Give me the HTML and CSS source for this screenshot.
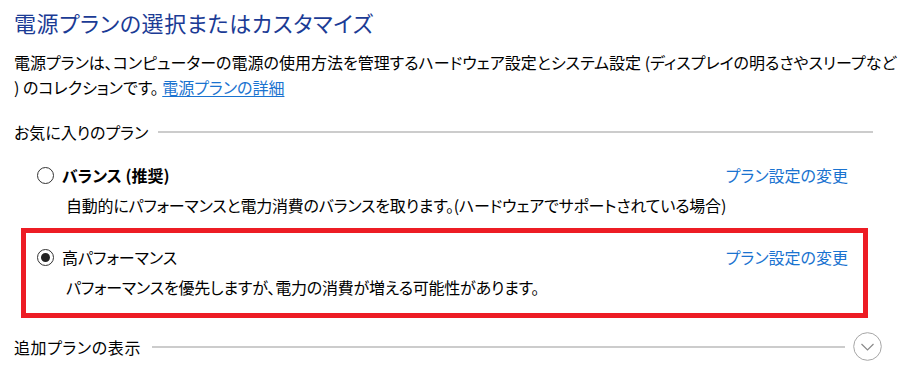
FILE: index.html
```html
<!DOCTYPE html>
<html lang="ja">
<head>
<meta charset="utf-8">
<title>電源オプション</title>
<link rel="stylesheet" href="styles.css">
</head>
<body>
<main class="page">
  <h1 class="title">電源プランの選択またはカスタマイズ</h1>
  <p class="intro">電源プランは、コンピューターの電源の使用方法を管理するハードウェア設定とシステム設定 (ディスプレイの明るさやスリープなど<br>) のコレクションです。 <a class="link underline" href="#">電源プランの詳細</a></p>

  <div class="section-head">
    <span class="section-label">お気に入りのプラン</span>
    <span class="rule rule-first"></span>
  </div>

  <div class="plan">
    <div class="plan-row">
      <span class="radio"></span>
      <span class="plan-name bold">バランス (推奨)</span>
      <a class="link plan-link" href="#">プラン設定の変更</a>
    </div>
    <p class="plan-desc">自動的にパフォーマンスと電力消費のバランスを取ります。(ハードウェアでサポートされている場合)</p>
  </div>

  <div class="plan plan-selected">
    <div class="plan-row">
      <span class="radio radio-on"></span>
      <span class="plan-name">高パフォーマンス</span>
      <a class="link plan-link" href="#">プラン設定の変更</a>
    </div>
    <p class="plan-desc">パフォーマンスを優先しますが、電力の消費が増える可能性があります。</p>
  </div>

  <div class="section-head section-more">
    <span class="section-label">追加プランの表示</span>
    <span class="rule rule-second"></span>
    <span class="expand">
      <svg width="29" height="29" viewBox="0 0 29 29" aria-hidden="true">
        <circle cx="14.5" cy="14.5" r="13.8" fill="#fff" stroke="#a6a6a6" stroke-width="1"/>
        <path d="M8.5 12 L14.5 18 L20.5 12" fill="none" stroke="#8a8a8a" stroke-width="1.2"/>
      </svg>
    </span>
  </div>
</main>
</body>
</html>
```
FILE: styles.css
```css
html, body {
  margin: 0;
  padding: 0;
  background: #ffffff;
}

body {
  font-family: "Noto Sans CJK JP", "Noto Sans", sans-serif;
  font-feature-settings: "palt" 1;
  color: #000000;
  font-size: 16px;
}

.page {
  width: 901px;
  height: 371px;
  box-sizing: border-box;
  padding: 7px 19px 0 14px;
  overflow: hidden;
}

.title {
  margin: 0;
  font-size: 22px;
  line-height: 30px;
  font-weight: 400;
  letter-spacing: 0.6px;
  color: #1b3b95;
}

.intro {
  margin: 13px 0 0 0;
  line-height: 25px;
  letter-spacing: 0;
  white-space: nowrap;
}

.link {
  color: #1a73d0;
  text-decoration: none;
}

.underline {
  text-decoration: underline;
  text-underline-offset: 2px;
}

.section-head {
  display: flex;
  align-items: center;
  height: 24px;
  margin-top: 20px;
}

.section-label {
  line-height: 24px;
  white-space: nowrap;
}

.section-more .section-label {
  letter-spacing: 0.6px;
}

.rule {
  height: 2px;
  background: #cccccc;
  flex: 1;
}

.rule-first {
  margin-left: 10px;
  margin-right: 9px;
}

.plan {
  margin: 7px 19px 0 12px;
  height: 80px;
  box-sizing: border-box;
  padding: 12px 15px 0 11px;
}

.plan + .plan {
  margin-top: 2px;
}

.plan-selected {
  outline: 5px solid #ed1c24;
}

.plan-row {
  display: flex;
  align-items: center;
  height: 24px;
}

.radio {
  width: 17px;
  height: 17px;
  box-sizing: border-box;
  border: 1px solid #333333;
  border-radius: 50%;
  background: #fff;
  margin-right: 8px;
  display: flex;
  align-items: center;
  justify-content: center;
}

.radio-on::after {
  content: "";
  width: 9px;
  height: 9px;
  border-radius: 50%;
  background: #222222;
}

.plan-name {
  flex: 1;
  line-height: 24px;
}

.bold {
  font-weight: 700;
}

.plan-link {
  line-height: 24px;
}

.plan-desc {
  margin: 6px 0 0 29px;
  line-height: 24px;
  letter-spacing: -0.2px;
  white-space: nowrap;
}

.section-more {
  height: 29px;
  margin-top: 19px;
}

.rule-second {
  margin-left: 11px;
  margin-right: 8px;
}

.expand {
  width: 29px;
  height: 29px;
  display: block;
}

.expand svg {
  display: block;
}
```
